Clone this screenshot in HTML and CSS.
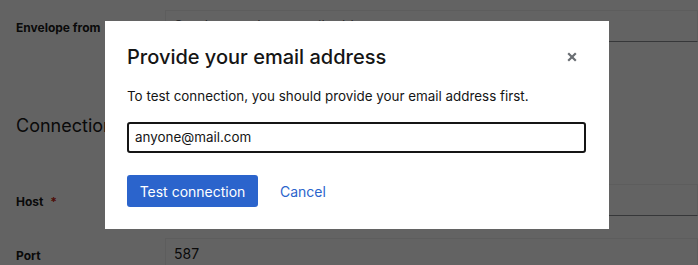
FILE: index.html
```html
<!DOCTYPE html>
<html lang="en">
<head>
<meta charset="utf-8">
<title>Provide your email address</title>
<link rel="stylesheet" href="styles.css">
</head>
<body>
<div class="page">
  <div class="row row-envelope">
    <label class="label">Envelope from <span class="help">?</span></label>
    <div class="control"><div class="input placeholder">Sender envelope email address</div></div>
  </div>
  <h2 class="section-title">Connection</h2>
  <div class="row row-host">
    <label class="label">Host <span class="req">*</span></label>
    <div class="control"><div class="input"></div></div>
  </div>
  <div class="row row-port">
    <label class="label">Port</label>
    <div class="control"><div class="input">587</div></div>
  </div>
</div>
<div class="backdrop">
  <div class="modal" role="dialog" aria-labelledby="mtitle">
    <div class="modal-header">
      <h1 class="modal-title" id="mtitle">Provide your email address</h1>
      <button class="close" aria-label="Close">
        <svg width="10" height="10" viewBox="0 0 10 10"><path d="M1.2 1.2 L8.8 8.8 M8.8 1.2 L1.2 8.8" stroke="#6a6e73" stroke-width="2.2" stroke-linecap="butt"/></svg>
      </button>
    </div>
    <p class="modal-text">To test connection, you should provide your email address first.</p>
    <div class="email-field">anyone@mail.com</div>
    <div class="actions">
      <button class="btn-primary">Test connection</button>
      <button class="btn-link">Cancel</button>
    </div>
  </div>
</div>
</body>
</html>
```

FILE: styles.css
```css
* { box-sizing: border-box; }
html, body { margin: 0; padding: 0; }
body {
  width: 698px;
  height: 265px;
  overflow: hidden;
  background: #ffffff;
  font-family: Inter, "Noto Sans", sans-serif;
  color: #151515;
  position: relative;
}
.page {
  display: flex;
  flex-direction: column;
}
.row {
  display: flex;
  align-items: center;
}
.row-envelope { margin-top: 10px; }
.row-host { margin-top: 44px; }
.row-port { margin-top: 22px; }
.label {
  width: 165px;
  padding-left: 16px;
  font-size: 12px;
  font-weight: 700;
  padding-top: 2px;
}
.help { color: #6a6e73; margin-left: 4px; }
.req { color: #c9190b; margin-left: 4px; }
.control { flex: 1; }
.input {
  height: 32px;
  border: 1px solid #f0f0f0;
  border-bottom-color: #8a8d90;
  padding: 0 8px;
  font-size: 14px;
  line-height: 30px;
  white-space: nowrap;
}
.placeholder { color: #6a6e73; }
.section-title {
  margin: 70px 0 0 16px;
  font-size: 18px;
  font-weight: 400;
  line-height: 28px;
  height: 28px;
  white-space: nowrap;
}

.backdrop {
  position: absolute;
  inset: 0;
  background: rgba(3, 3, 3, 0.62);
}
.modal {
  position: absolute;
  left: 105px;
  top: 21px;
  width: 504px;
  height: 208px;
  background: #ffffff;
  padding: 20px 22px 0 22px;
}
.modal-header {
  display: flex;
  align-items: center;
  justify-content: space-between;
}
.modal-title {
  margin: 0;
  font-size: 20px;
  font-weight: 500;
  line-height: 32px;
}
.close {
  border: 0;
  background: transparent;
  padding: 0;
  width: 10px;
  height: 10px;
  margin-right: 10px;
  display: flex;
}
.modal-text {
  margin: 13px 0 0 0;
  font-size: 13.4px;
  line-height: 20px;
}
.email-field {
  margin-top: 16px;
  width: 459px;
  height: 31px;
  border: 2px solid #151515;
  border-radius: 3px;
  padding: 0 6px;
  font-size: 13.4px;
  line-height: 27px;
}
.actions {
  display: flex;
  align-items: center;
  gap: 7px;
  margin-top: 22px;
}
.btn-primary {
  height: 32px;
  width: 131px;
  border: 0;
  border-radius: 3px;
  background: #2b64cc;
  color: #ffffff;
  font-family: inherit;
  font-size: 14px;
  padding: 0;
}
.btn-link {
  border: 0;
  background: transparent;
  color: #2b64cc;
  font-family: inherit;
  font-size: 14px;
  padding: 0 15px;
  height: 32px;
}
```
